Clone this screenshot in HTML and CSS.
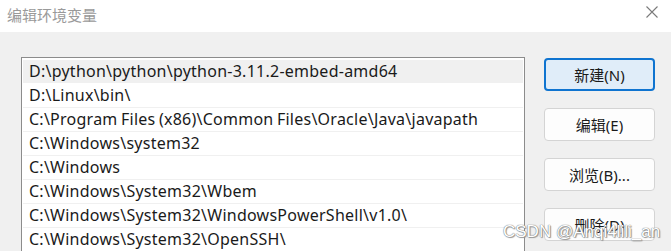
FILE: index.html
```
<!DOCTYPE html>
<html lang="zh-CN">
<head>
  <meta charset="UTF-8" />
  <title>编辑环境变量</title>
  <link rel="stylesheet" href="styles.css">
</head>
<body>
  <div class="window">
    <div class="titlebar">
      <span class="title">编辑环境变量</span>
      <svg class="close" width="12" height="12" viewBox="0 0 12 12">
        <path d="M0.5 0.5 L11.5 11.5 M11.5 0.5 L0.5 11.5" stroke="#7a7a7a" stroke-width="1.1" fill="none" />
      </svg>
    </div>

    <div class="content">
      <ul class="pathlist">
        <li class="selected">D:\python\python\python-3.11.2-embed-amd64</li>
        <li>D:\Linux\bin\</li>
        <li>C:\Program Files (x86)\Common Files\Oracle\Java\javapath</li>
        <li>C:\Windows\system32</li>
        <li>C:\Windows</li>
        <li>C:\Windows\System32\Wbem</li>
        <li>C:\Windows\System32\WindowsPowerShell\v1.0\</li>
        <li>C:\Windows\System32\OpenSSH\</li>
      </ul>

      <div class="actions">
        <button class="primary">新建(N)</button>
        <button>编辑(E)</button>
        <button>浏览(B)...</button>
        <button>删除(D)</button>
      </div>
    </div>

    <div class="watermark">CSDN @Anqi4lili_an</div>
  </div>
</body>
</html>
```

FILE: styles.css
```
body {
  margin: 0;
  background: #f0f0f0;
  font-family: "Noto Sans", "Noto Sans CJK SC", sans-serif;
  overflow: hidden;
}
.window {
  position: relative;
  width: 671px;
  height: 251px;
  overflow: hidden;
}
.titlebar {
  height: 32px;
  background: #fff;
  display: flex;
  align-items: center;
  justify-content: space-between;
  padding: 0 13px 0 7px;
}
.title {
  font-size: 15px;
  color: #9a9a9a;
  margin-top: -3px;
}
.close {
  margin-top: -8px;
}
.content {
  display: flex;
  align-items: flex-start;
  padding: 25px 0 0 21px;
}
.pathlist {
  list-style: none;
  margin: 0;
  padding: 2px 1px;
  width: 500px;
  height: 240px;
  background: #fff;
  border: 1px solid #8c8c8c;
}
.pathlist li {
  height: 23px;
  line-height: 23px;
  padding-left: 6px;
  font-size: 16px;
  letter-spacing: 0.25px;
  word-spacing: -1px;
  color: #1a1a1a;
  border-bottom: 1px solid #f0f0f0;
  white-space: nowrap;
}
.pathlist li.selected {
  background: #f0f0f0;
  border-bottom-color: #fff;
}
.actions {
  display: flex;
  flex-direction: column;
  gap: 17px;
  margin: 1px 0 0 19px;
}
.actions button {
  width: 111px;
  height: 33px;
  font-family: "Noto Sans", "Noto Sans CJK SC", sans-serif;
  font-size: 15px;
  color: #1a1a1a;
  background: #fdfdfd;
  border: 1px solid #d4d4d4;
  border-radius: 4px;
  padding: 0;
}
.actions button.primary {
  background: #e0edf9;
  border: 2px solid #0f74d0;
}
.watermark {
  position: absolute;
  left: 503px;
  top: 222px;
  font-family: "Liberation Sans", Arial, sans-serif;
  font-size: 17px;
  color: #fff;
  text-shadow: 0 0 1px #777, 0 0 1px #777, 1px 1px 1px #999;
}
```
